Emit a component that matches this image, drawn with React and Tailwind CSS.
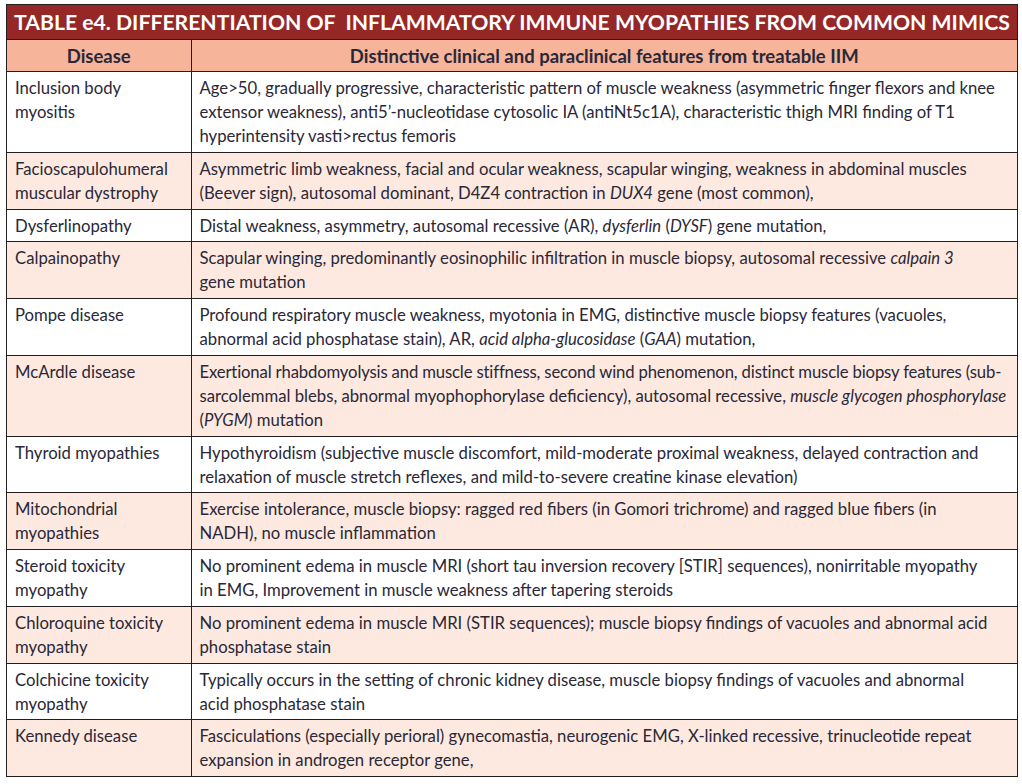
import React from "react";

// Table e4 — IIM vs common mimics
// each description is split into its printed lines so the wraps match the page
const ROWS = [
  {
    name: ["Inclusion body", "myositis"],
    lines: [
      ["Age>50, gradually progressive, characteristic pattern of muscle weakness (asymmetric finger flexors and knee"],
      ["extensor weakness), anti5’-nucleotidase cytosolic IA (antiNt5c1A), characteristic thigh MRI finding of T1"],
      ["hyperintensity vasti>rectus femoris"],
    ],
  },
  {
    name: ["Facioscapulohumeral", "muscular dystrophy"],
    tint: true,
    lines: [
      ["Asymmetric limb weakness, facial and ocular weakness, scapular winging, weakness in abdominal muscles"],
      ["(Beever sign), autosomal dominant, D4Z4 contraction in ", { i: "DUX4" }, " gene (most common),"],
    ],
  },
  {
    name: ["Dysferlinopathy"],
    lines: [["Distal weakness, asymmetry, autosomal recessive (AR), ", { i: "dysferlin" }, " (", { i: "DYSF" }, ") gene mutation,"]],
  },
  {
    name: ["Calpainopathy"],
    tint: true,
    lines: [
      ["Scapular winging, predominantly eosinophilic infiltration in muscle biopsy, autosomal recessive ", { i: "calpain 3" }],
      ["gene mutation"],
    ],
  },
  {
    name: ["Pompe disease"],
    lines: [
      ["Profound respiratory muscle weakness, myotonia in EMG, distinctive muscle biopsy features (vacuoles,"],
      ["abnormal acid phosphatase stain), AR, ", { i: "acid alpha-glucosidase" }, " (", { i: "GAA" }, ") mutation,"],
    ],
  },
  {
    name: ["McArdle disease"],
    tint: true,
    lines: [
      ["Exertional rhabdomyolysis and muscle stiffness, second wind phenomenon, distinct muscle biopsy features (sub-", { tight: true }],
      ["sarcolemmal blebs, abnormal myophophorylase deficiency), autosomal recessive, ", { i: "muscle glycogen phosphorylase" }],
      ["(", { i: "PYGM" }, ") mutation"],
    ],
  },
  {
    name: ["Thyroid myopathies"],
    lines: [
      ["Hypothyroidism (subjective muscle discomfort, mild-moderate proximal weakness, delayed contraction and"],
      ["relaxation of muscle stretch reflexes, and mild-to-severe creatine kinase elevation)"],
    ],
  },
  {
    name: ["Mitochondrial", "myopathies"],
    tint: true,
    lines: [
      ["Exercise intolerance, muscle biopsy: ragged red fibers (in Gomori trichrome) and ragged blue fibers (in"],
      ["NADH), no muscle inflammation"],
    ],
  },
  {
    name: ["Steroid toxicity", "myopathy"],
    lines: [
      ["No prominent edema in muscle MRI (short tau inversion recovery [STIR] sequences), nonirritable myopathy"],
      ["in EMG, Improvement in muscle weakness after tapering steroids"],
    ],
  },
  {
    name: ["Chloroquine toxicity", "myopathy"],
    tint: true,
    lines: [
      ["No prominent edema in muscle MRI (STIR sequences); muscle biopsy findings of vacuoles and abnormal acid"],
      ["phosphatase stain"],
    ],
  },
  {
    name: ["Colchicine toxicity", "myopathy"],
    lines: [
      ["Typically occurs in the setting of chronic kidney disease, muscle biopsy findings of vacuoles and abnormal"],
      ["acid phosphatase stain"],
    ],
  },
  {
    name: ["Kennedy disease"],
    tint: true,
    lines: [
      ["Fasciculations (especially perioral) gynecomastia, neurogenic EMG, X-linked recessive, trinucleotide repeat"],
      ["expansion in androgen receptor gene,"],
    ],
  },
];

const Line = ({ parts }) => {
  const tight = parts.some((p) => p && p.tight);
  return (
    <span className={tight ? "block whitespace-nowrap tracking-[-0.15px]" : "block whitespace-nowrap"}>
      {parts.map((p, k) =>
        typeof p === "string" ? <span key={k}>{p}</span> : p.i ? <em key={k}>{p.i}</em> : null
      )}
    </span>
  );
};

export default function App() {
  return (
    <div className="w-[1022px] h-[784px] bg-white pt-[4px] pl-[6px]" style={{ fontFamily: "Lato, 'Open Sans', sans-serif" }}>
      <div className="w-[1012px] border-[1.5px] border-[#231f20]">
        <div className="h-[34px] bg-[#952826] text-white font-bold text-[21.2px] leading-[34px] pl-[7px] whitespace-nowrap">
          TABLE e4. DIFFERENTIATION OF&nbsp; INFLAMMATORY IMMUNE MYOPATHIES FROM COMMON MIMICS
        </div>
        <table className="w-full table-fixed border-collapse text-[#2a2838] text-[16.7px] leading-[24px]">
          <colgroup>
            <col className="w-[184px]" />
            <col />
          </colgroup>
          <thead>
            <tr className="bg-[#f6b49b] font-bold text-[18.5px]">
              <th className="h-[32px] border-t-[1.5px] border-r-[1.5px] border-[#231f20] text-center">Disease</th>
              <th className="h-[32px] border-t-[1.5px] border-[#231f20] text-center whitespace-nowrap">
                Distinctive clinical and paraclinical features from treatable IIM
              </th>
            </tr>
          </thead>
          <tbody>
            {ROWS.map((r, idx) => (
              <tr key={idx} className={r.tint ? "bg-[#fde9df]" : "bg-white"}>
                <td className="align-top border-t-[1.5px] border-r-[1.5px] border-[#231f20] pl-[8px] pt-[4px] pb-[3.75px]">
                  {r.name.map((n) => (
                    <span key={n} className="block whitespace-nowrap">{n}</span>
                  ))}
                </td>
                <td className="align-top border-t-[1.5px] border-[#231f20] pl-[8px] pt-[4px] pb-[3.75px]">
                  {r.lines.map((l, k) => (
                    <Line key={k} parts={l} />
                  ))}
                </td>
              </tr>
            ))}
          </tbody>
        </table>
      </div>
    </div>
  );
}
